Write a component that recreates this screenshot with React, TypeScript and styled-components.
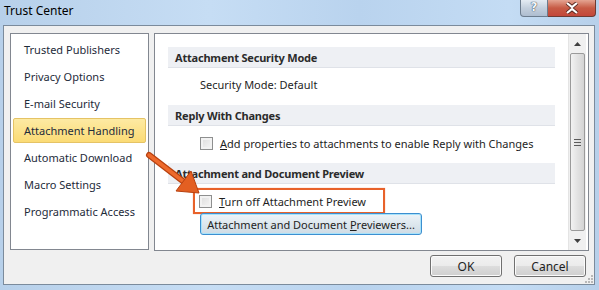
import React from "react";
import styled, { createGlobalStyle } from "styled-components";

const GlobalStyle = createGlobalStyle`
  html, body {
    margin: 0;
    padding: 0;
    background: #bcd5ee;
  }
  body {
    font-family: "Segoe UI", "Noto Sans", "Liberation Sans", sans-serif;
    font-size: 11px;
    color: #1e1e1e;
    white-space: nowrap;
  }
`;

const categories = [
  "Trusted Publishers",
  "Privacy Options",
  "E-mail Security",
  "Attachment Handling",
  "Automatic Download",
  "Macro Settings",
  "Programmatic Access",
];

const App: React.FC = () => {
  return (
    <>
      <GlobalStyle />
      <Window>
        <TitleBar>
          <Title>Trust Center</Title>
          <Controls>
            <HelpButton>?</HelpButton>
            <CloseButton>
              <svg width="16" height="12" viewBox="0 0 16 12">
                <path
                  d="M3 1 L8 5 L13 1 M3 11 L8 7 L13 11"
                  stroke="#5a2a22"
                  strokeWidth="4"
                  fill="none"
                />
                <path
                  d="M3 1 L8 5 L13 1 M3 11 L8 7 L13 11"
                  stroke="#ffffff"
                  strokeWidth="2.2"
                  fill="none"
                />
              </svg>
            </CloseButton>
          </Controls>
        </TitleBar>
        <Client>
          <Body>
            <CategoryList>
              {categories.map((c) => (
                <Category key={c} selected={c === "Attachment Handling"}>
                  {c}
                </Category>
              ))}
            </CategoryList>
            <ContentPanel>
              <ContentInner>
                <SectionHeader>Attachment Security Mode</SectionHeader>
                <SectionBody>
                  <PlainRow>Security Mode: Default</PlainRow>
                </SectionBody>
                <SectionHeader>Reply With Changes</SectionHeader>
                <SectionBody>
                  <CheckRow>
                    <CheckBox />
                    <span>
                      <u>A</u>dd properties to attachments to enable Reply with Changes
                    </span>
                  </CheckRow>
                </SectionBody>
                <SectionHeader>Attachment and Document Preview</SectionHeader>
                <PreviewBody>
                  <Highlight>
                    <CheckRow>
                      <CheckBox />
                      <span>
                        <u>T</u>urn off Attachment Preview
                      </span>
                    </CheckRow>
                  </Highlight>
                  <FocusButton>
                    <span>
                      Attachment and Document <u>P</u>reviewers...
                    </span>
                  </FocusButton>
                </PreviewBody>
              </ContentInner>
              <ScrollBar>
                <ScrollArrow>
                  <svg width="7" height="4" viewBox="0 0 7 4">
                    <path d="M0 4 L3.5 0 L7 4 Z" fill="#404040" />
                  </svg>
                </ScrollArrow>
                <Thumb>
                  <Grip />
                </Thumb>
                <ScrollArrow>
                  <svg width="7" height="4" viewBox="0 0 7 4">
                    <path d="M0 0 L3.5 4 L7 0 Z" fill="#404040" />
                  </svg>
                </ScrollArrow>
              </ScrollBar>
            </ContentPanel>
          </Body>
          <Footer>
            <DialogButton>OK</DialogButton>
            <DialogButton>Cancel</DialogButton>
          </Footer>
          <SizeGrip>
            <svg width="10" height="10" viewBox="0 0 10 10">
              <g fill="#b8b8b8">
                <rect x="8" y="2" width="2" height="2" />
                <rect x="5" y="5" width="2" height="2" />
                <rect x="8" y="5" width="2" height="2" />
                <rect x="2" y="8" width="2" height="2" />
                <rect x="5" y="8" width="2" height="2" />
                <rect x="8" y="8" width="2" height="2" />
              </g>
            </svg>
          </SizeGrip>
        </Client>
        <Arrow width="70" height="55" viewBox="0 0 70 55">
          <path
            d="M7 7 L46 37"
            stroke="#b8410f"
            strokeWidth="6"
            strokeLinecap="round"
          />
          <path
            d="M7 7 L46 37"
            stroke="#ee6a2c"
            strokeWidth="3.5"
            strokeLinecap="round"
          />
          <path d="M34 43 L57 45 L49 23 Z" fill="#e35f22" stroke="#b8410f" strokeWidth="1" />
        </Arrow>
      </Window>
    </>
  );
};

export default App;

const Window = styled.div`
  position: relative;
  width: 599px;
  height: 290px;
  display: flex;
  flex-direction: column;
  background: linear-gradient(90deg, #b7d0ea 0%, #c6ddf4 35%, #b9d3ee 60%, #c4dcf4 85%, #b7d0ea 100%);
  overflow: hidden;
`;

const TitleBar = styled.div`
  height: 25px;
  display: flex;
  align-items: flex-start;
  justify-content: space-between;
  padding-left: 4px;
  box-sizing: border-box;
`;

const Title = styled.div`
  font-size: 12px;
  line-height: 22px;
  color: #000;
`;

const Controls = styled.div`
  display: flex;
  margin-right: 3px;
`;

const HelpButton = styled.div`
  width: 28px;
  height: 17px;
  box-sizing: border-box;
  border: 1px solid #6c7c8e;
  border-top: none;
  border-radius: 0 0 0 4px;
  background: linear-gradient(#e4ebf3, #c3cfdd 50%, #aebdd0);
  color: #f4f7fa;
  text-shadow: 0 0 1px #2d3b4c, 0 0 1px #2d3b4c;
  font: bold 12px "DejaVu Sans", sans-serif;
  text-align: center;
  line-height: 15px;
`;

const CloseButton = styled.div`
  width: 48px;
  height: 17px;
  box-sizing: border-box;
  border: 1px solid #6e3a32;
  border-top: none;
  border-left: none;
  border-radius: 0 0 4px 0;
  background: linear-gradient(#e4a492, #c75b45 50%, #c3473a);
  display: flex;
  align-items: center;
  justify-content: center;
`;

const Client = styled.div`
  position: relative;
  margin: 0 4px 0 3px;
  height: 260px;
  box-sizing: border-box;
  background: #f0f0f0;
  border: 1px solid #7b8b9c;
  padding: 7px 5px 0 6px;
  display: flex;
  flex-direction: column;
`;

const Body = styled.div`
  display: flex;
  gap: 5px;
  height: 218px;
`;

const CategoryList = styled.div`
  width: 139px;
  height: 217px;
  box-sizing: border-box;
  background: #fff;
  border: 1px solid #828790;
  padding: 3px 2px 0 2px;
  display: flex;
  flex-direction: column;
`;

const Category = styled.div<{ selected?: boolean }>`
  height: 25px;
  margin-bottom: 2px;
  box-sizing: border-box;
  padding-left: 10px;
  display: flex;
  align-items: center;
  color: #1e2b3a;
  border-radius: 2px;
  border: 1px solid ${(p) => (p.selected ? "#e5c365" : "transparent")};
  background: ${(p) =>
    p.selected ? "linear-gradient(#fdeaa3, #fbdb75)" : "transparent"};
`;

const ContentPanel = styled.div`
  flex: 1;
  box-sizing: border-box;
  background: #fff;
  border: 1px solid #828790;
  display: flex;
`;

const ContentInner = styled.div`
  flex: 1;
  padding: 13px 13px 0 13px;
`;

const SectionHeader = styled.div`
  height: 21px;
  box-sizing: border-box;
  background: #eef0f4;
  border-bottom: 1px solid #dfe2e8;
  padding-left: 7px;
  display: flex;
  align-items: center;
  font-weight: bold;
  letter-spacing: -0.2px;
  color: #2b2b2b;
`;

const SectionBody = styled.div`
  padding: 9px 0 12px 32px;
`;

const PreviewBody = styled.div`
  padding: 4px 0 0 25px;
  display: flex;
  flex-direction: column;
  align-items: flex-start;
`;

const PlainRow = styled.div`
  height: 16px;
  line-height: 16px;
`;

const CheckRow = styled.div`
  height: 16px;
  display: flex;
  align-items: center;
  gap: 7px;
`;

const CheckBox = styled.div`
  width: 13px;
  height: 13px;
  box-sizing: border-box;
  border: 1px solid #8e8f8f;
  background: linear-gradient(135deg, #dcdcdc, #f6f6f6);
  box-shadow: inset 0 0 0 2px #f2f2f2;
`;

const Highlight = styled.div`
  border: 2px solid #e8622a;
  padding: 3px 17px 3px 4px;
  box-shadow: 0 0 1px #f0a080;
`;

const FocusButton = styled.div`
  margin: -1px 0 0 7px;
  width: 222px;
  height: 22px;
  box-sizing: border-box;
  border: 1px solid #3c8fd0;
  border-radius: 3px;
  box-shadow: inset 0 0 0 1px #a8e2fa;
  background: linear-gradient(#eef4f8, #dde7ee 50%, #cfdbe4);
  display: flex;
  align-items: center;
  justify-content: center;
`;

const ScrollBar = styled.div`
  width: 17px;
  margin: 0 2px 0 0;
  display: flex;
  flex-direction: column;
  background: #f0f0f0;
  border-left: 1px solid #e4e4e4;
`;

const ScrollArrow = styled.div`
  height: 19px;
  display: flex;
  align-items: center;
  justify-content: center;
`;

const Thumb = styled.div`
  flex: 1;
  margin: 0 1px;
  box-sizing: border-box;
  border: 1px solid #9a9a9a;
  border-radius: 2px;
  background: linear-gradient(90deg, #f2f2f2, #e2e2e2 50%, #d4d4d4);
  display: flex;
  align-items: center;
  justify-content: center;
`;

const Grip = styled.div`
  width: 7px;
  height: 7px;
  background: repeating-linear-gradient(#5c5c5c 0 1px, transparent 1px 3px);
`;

const Footer = styled.div`
  display: flex;
  justify-content: flex-end;
  gap: 12px;
  padding: 4px 3px 0 0;
`;

const DialogButton = styled.div`
  width: 72px;
  height: 22px;
  box-sizing: border-box;
  border: 1px solid #707070;
  border-radius: 3px;
  box-shadow: inset 0 0 0 1px #fbfbfb;
  background: linear-gradient(#f2f2f2, #ebebeb 50%, #dddddd 51%, #cfcfcf);
  display: flex;
  align-items: center;
  justify-content: center;
  color: #1e1e1e;
  font-size: 12px;
`;

const SizeGrip = styled.div`
  position: absolute;
  right: 1px;
  bottom: 1px;
  line-height: 0;
`;

const Arrow = styled.svg`
  position: absolute;
  left: 142px;
  top: 148px;
`;
